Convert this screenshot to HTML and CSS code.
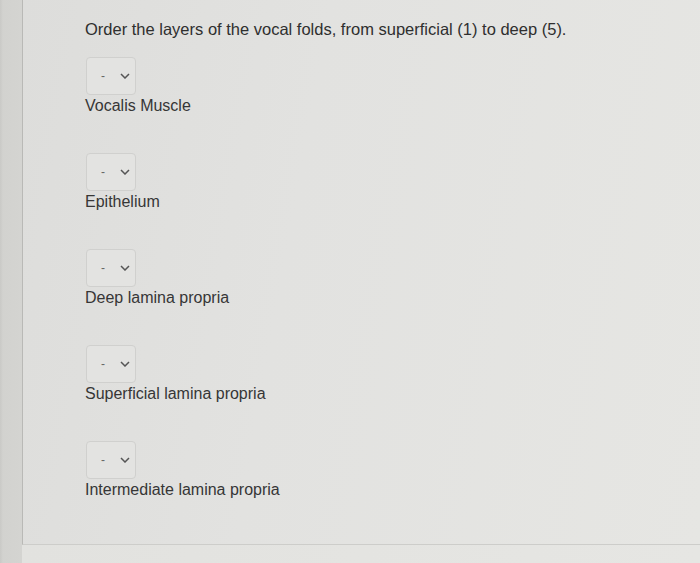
FILE: index.html
```html
<!DOCTYPE html>
<html lang="en">
<head>
  <meta charset="UTF-8">
  <title>Order the layers</title>
  <link rel="stylesheet" href="styles.css">
</head>
<body>
  <div class="card">
    <p class="question">Order the layers of the vocal folds, from superficial (1) to deep (5).</p>

    <div class="item">
      <div class="pick"><span class="dash">-</span><svg viewBox="0 0 10 6" width="10" height="6"><path d="M1 1 L5 5 L9 1" /></svg></div>
      <div class="label">Vocalis Muscle</div>
    </div>
    <div class="item">
      <div class="pick"><span class="dash">-</span><svg viewBox="0 0 10 6" width="10" height="6"><path d="M1 1 L5 5 L9 1" /></svg></div>
      <div class="label">Epithelium</div>
    </div>
    <div class="item">
      <div class="pick"><span class="dash">-</span><svg viewBox="0 0 10 6" width="10" height="6"><path d="M1 1 L5 5 L9 1" /></svg></div>
      <div class="label">Deep lamina propria</div>
    </div>
    <div class="item">
      <div class="pick"><span class="dash">-</span><svg viewBox="0 0 10 6" width="10" height="6"><path d="M1 1 L5 5 L9 1" /></svg></div>
      <div class="label">Superficial lamina propria</div>
    </div>
    <div class="item">
      <div class="pick"><span class="dash">-</span><svg viewBox="0 0 10 6" width="10" height="6"><path d="M1 1 L5 5 L9 1" /></svg></div>
      <div class="label">Intermediate lamina propria</div>
    </div>
  </div>
</body>
</html>
```

FILE: styles.css
```css
body {
  margin: 0;
  background: linear-gradient(90deg, #c9c9c6 0, #d2d2cf 3px, #d4d4d1 22px, #e2e2df 22px, #e6e6e3 100%);
  font-family: "Liberation Sans", Arial, sans-serif;
  color: #333;
  height: 563px;
  overflow: hidden;
}
.card {
  margin-left: 22px;
  height: 545px;
  box-sizing: border-box;
  border-left: 1px solid #b9b9b6;
  border-bottom: 1px solid #cdcdca;
  background: linear-gradient(100deg, #dddddb 0%, #e2e2e0 40%, #e6e6e3 100%);
  padding: 19px 0 0 62px;
}
.question {
  margin: 0 0 18px 0;
  font-size: 16.5px;
  line-height: 20px;
  color: #2f2f2f;
}
.item {
  margin-bottom: 38px;
}
.pick {
  width: 50px;
  height: 38px;
  box-sizing: border-box;
  border: 1px solid #d0d0ce;
  border-radius: 4px;
  background-color: #e3e3e1;
  display: flex;
  align-items: center;
  padding-left: 14px;
  gap: 15px;
  margin-left: 1px;
}
.pick .dash {
  font-size: 12px;
  color: #666;
}
.pick svg path {
  fill: none;
  stroke: #555;
  stroke-width: 1.5;
}
.label {
  margin-top: 2px;
  font-size: 16px;
  line-height: 18px;
  color: #363636;
}
```
